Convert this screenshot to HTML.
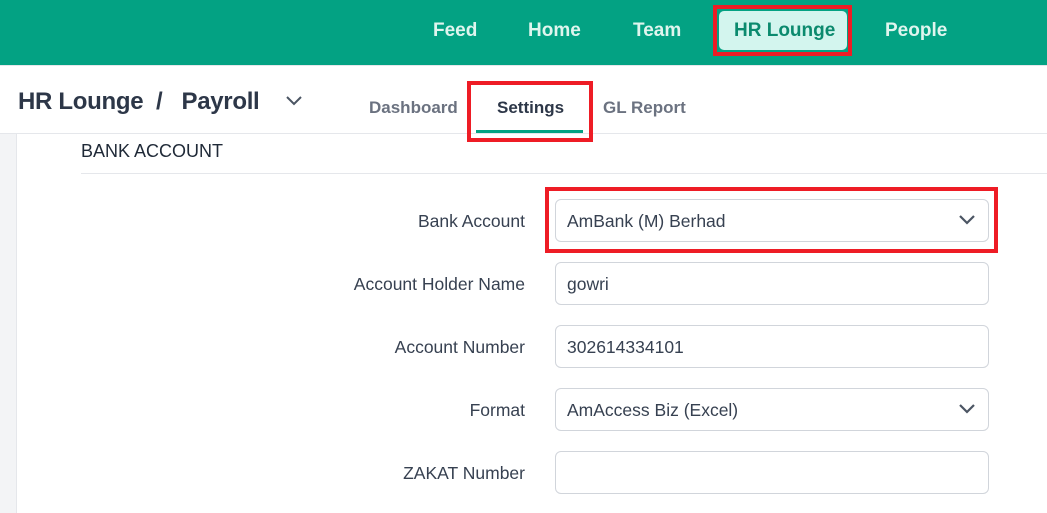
<!DOCTYPE html>
<html><head><style>
*{box-sizing:border-box;margin:0;padding:0}
body{width:1047px;height:513px;overflow:hidden;background:#fff;font-family:"Liberation Sans",sans-serif;position:relative}
.top{position:absolute;left:0;top:0;width:1047px;height:66px;background:#03a283;border-bottom:1px solid #e5e7eb}
.nav{position:absolute;top:20px;font-size:19px;font-weight:bold;color:#dff5ee}
.pill{position:absolute;left:719px;top:11px;width:128px;height:39px;background:#d3f5ee;border-radius:5px}
.red{position:absolute;border:4px solid #ee1c25}
.a{position:absolute;white-space:nowrap}
.strip{position:absolute;left:0;top:134px;width:17px;height:379px;background:#f3f4f6;border-right:1px solid #e5e7eb}
.lab{position:absolute;right:522px;font-size:17.5px;color:#374151}
.inp{position:absolute;left:555px;width:434px;height:43px;border:1px solid #d1d5db;border-radius:6px;font-size:17.5px;color:#374151;padding:11px 0 0 11px}
.chev{position:absolute;right:12px;top:14px}
</style></head><body>
<div class="top"></div>
<div class="nav" style="left:433px">Feed</div>
<div class="nav" style="left:528px">Home</div>
<div class="nav" style="left:633px">Team</div>
<div class="pill"></div>
<div class="nav" style="left:734px;color:#0b8a6e">HR Lounge</div>
<div class="nav" style="left:885px">People</div>
<div class="red" style="left:713px;top:5px;width:139px;height:51px"></div>

<div class="a" style="left:18px;top:88px;font-size:24px;font-weight:bold;color:#2d3748;letter-spacing:-0.3px">HR Lounge&nbsp; /&nbsp;&nbsp; Payroll</div>
<svg class="a" style="left:284px;top:94px" width="20" height="14" viewBox="0 0 20 14"><path d="M3 3l7 7 7-7" fill="none" stroke="#4b5563" stroke-width="2"/></svg>
<div class="a" style="left:369px;top:98px;font-size:17px;font-weight:bold;color:#6b7280">Dashboard</div>
<div class="a" style="left:497px;top:98px;font-size:17px;font-weight:bold;color:#2d3748">Settings</div>
<div class="a" style="left:603px;top:98px;font-size:17px;font-weight:bold;color:#6b7280">GL Report</div>
<div class="a" style="left:476px;top:130px;width:107px;height:3px;background:#03a283"></div>
<div class="a" style="left:0;top:133px;width:1047px;height:1px;background:#e5e7eb"></div>
<div class="red" style="left:467px;top:81px;width:126px;height:61px"></div>
<div class="strip"></div>
<div class="a" style="left:81px;top:141px;font-size:18px;color:#1f2937">BANK ACCOUNT</div>
<div class="a" style="left:81px;top:173px;width:966px;height:1px;background:#e5e7eb"></div>

<div class="lab" style="top:211px">Bank Account</div>
<div class="inp" style="top:199px">AmBank (M) Berhad<svg class="chev" width="18" height="12" viewBox="0 0 18 12"><path d="M2 2l7 7 7-7" fill="none" stroke="#4b5563" stroke-width="2.2"/></svg></div>
<div class="red" style="left:545px;top:187px;width:453px;height:66px"></div>
<div class="lab" style="top:274px">Account Holder Name</div>
<div class="inp" style="top:262px">gowri</div>
<div class="lab" style="top:337px">Account Number</div>
<div class="inp" style="top:325px">302614334101</div>
<div class="lab" style="top:400px">Format</div>
<div class="inp" style="top:388px">AmAccess Biz (Excel)<svg class="chev" width="18" height="12" viewBox="0 0 18 12"><path d="M2 2l7 7 7-7" fill="none" stroke="#4b5563" stroke-width="2.2"/></svg></div>
<div class="lab" style="top:463px">ZAKAT Number</div>
<div class="inp" style="top:451px"></div>
</body></html>
